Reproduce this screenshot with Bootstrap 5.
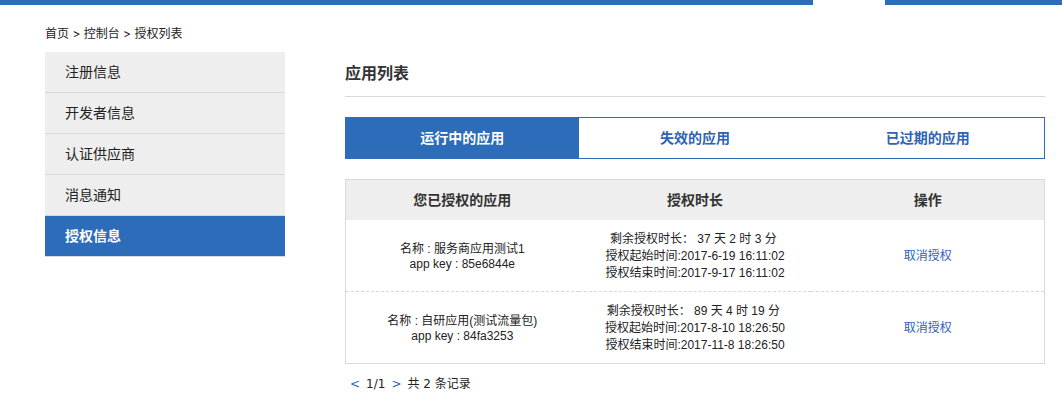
<!DOCTYPE html>
<html lang="zh-CN">
<head>
<meta charset="utf-8">
<meta name="viewport" content="width=device-width, initial-scale=1">
<title>授权列表</title>
<link rel="stylesheet" href="https://cdn.jsdelivr.net/npm/bootstrap@5.3.0/dist/css/bootstrap.min.css">
<style>
  :root { --brand: #2d6cb8; --brand-text: #2f63b3; --line: #d9d9d9; --soft: #eee; }
  body { font: 12px/16px "Liberation Sans", "Noto Sans CJK SC", sans-serif; color: #222; background: #fff; }
  a { color: var(--brand-text); text-decoration: none; }
  .top-strip { height: 5px; }
  .top-strip .fill { background: var(--brand); }
  .top-strip .fill-end { width: 177px; }
  .top-strip .current { width: 72px; }
  .page { padding: 20px 17px 20px 45px; }
  .crumbs { font-family: Inter, "Noto Sans CJK SC", sans-serif; padding-bottom: 10px; line-height: 17px; }
  .crumbs a { color: #222; }
  .columns { gap: 60px; }
  .side { width: 240px; }
  .side .list-group-item { background: var(--soft); color: #222; border: 0; border-bottom: 1px solid var(--line); padding: 10px 20px; font-size: 14px; line-height: 20px; }
  .side .list-group-item.active { background: var(--brand); background-clip: padding-box; color: #fff; font-weight: 700; margin: 0; }
  .side .list-group-item:last-child { border-bottom: 1px solid var(--line); }
  .main { min-width: 0; }
  .title { font-size: 16px; line-height: 24px; font-weight: 700; color: #333; margin: 0 0 20px; padding: 10px 0; border-bottom: 1px solid var(--line); }
  .tabs { border: 1px solid var(--brand); margin-bottom: 20px; }
  .tabs .nav-link { border-radius: 0; padding: 10px 0; font-size: 14px; line-height: 20px; font-weight: 700; color: var(--brand-text); }
  .tabs .nav-link.active { background: var(--brand); color: #fff; }
  .apps { table-layout: fixed; border: 1px solid var(--line); border-collapse: separate; border-spacing: 0; text-align: center; margin: 0; color: #222; }
  .apps th { background: var(--soft); border: 0; padding: 10px 0; font-size: 14px; line-height: 20px; font-weight: 700; color: #333; }
  .apps td { border: 0; padding: 11px 0 9px; line-height: 17px; height: 71px; vertical-align: middle; color: #222; }
  .apps tr + tr td { border-top: 1px dashed var(--line); height: 72px; }
  .apps .app-name { line-height: 15px; }
  .pager { font-family: "DejaVu Sans", "Noto Sans CJK SC", sans-serif; padding: 12px 5px; gap: 6px; }
</style>
</head>
<body>
<div class="top-strip d-flex">
  <div class="fill flex-grow-1"></div>
  <div class="current"></div>
  <div class="fill fill-end"></div>
</div>
<div class="page">
  <nav class="crumbs" aria-label="breadcrumb"><a href="#">首页</a> &gt; <a href="#">控制台</a> &gt; <span>授权列表</span></nav>
  <div class="columns d-flex align-items-start">
    <nav class="side list-group list-group-flush flex-shrink-0">
      <a class="list-group-item" href="#">注册信息</a>
      <a class="list-group-item" href="#">开发者信息</a>
      <a class="list-group-item" href="#">认证供应商</a>
      <a class="list-group-item" href="#">消息通知</a>
      <a class="list-group-item active" href="#" aria-current="page">授权信息</a>
    </nav>
    <main class="main flex-grow-1">
      <h1 class="title">应用列表</h1>
      <nav class="tabs nav nav-pills nav-justified">
        <a class="nav-link active" href="#" aria-current="page">运行中的应用</a>
        <a class="nav-link" href="#">失效的应用</a>
        <a class="nav-link" href="#">已过期的应用</a>
      </nav>
      <table class="apps table">
        <thead>
          <tr><th scope="col">您已授权的应用</th><th scope="col">授权时长</th><th scope="col">操作</th></tr>
        </thead>
        <tbody>
          <tr>
            <td class="app-name">名称 : 服务商应用测试1<br>app key : 85e6844e</td>
            <td>剩余授权时长： 37 天 2 时 3 分&nbsp;<br>授权起始时间:2017-6-19 16:11:02<br>授权结束时间:2017-9-17 16:11:02</td>
            <td><a href="#">取消授权</a></td>
          </tr>
          <tr>
            <td class="app-name">名称 : 自研应用(测试流量包)<br>app key : 84fa3253</td>
            <td>剩余授权时长： 89 天 4 时 19 分&nbsp;<br>授权起始时间:2017-8-10 18:26:50<br>授权结束时间:2017-11-8 18:26:50</td>
            <td><a href="#">取消授权</a></td>
          </tr>
        </tbody>
      </table>
      <div class="pager d-flex">
        <a href="#" aria-label="上一页">&lt;</a><span>1/1</span><a href="#" aria-label="下一页">&gt;</a><span>共 2 条记录</span>
      </div>
    </main>
  </div>
</div>
<script src="https://cdn.jsdelivr.net/npm/bootstrap@5.3.0/dist/js/bootstrap.bundle.min.js"></script>
</body>
</html>
